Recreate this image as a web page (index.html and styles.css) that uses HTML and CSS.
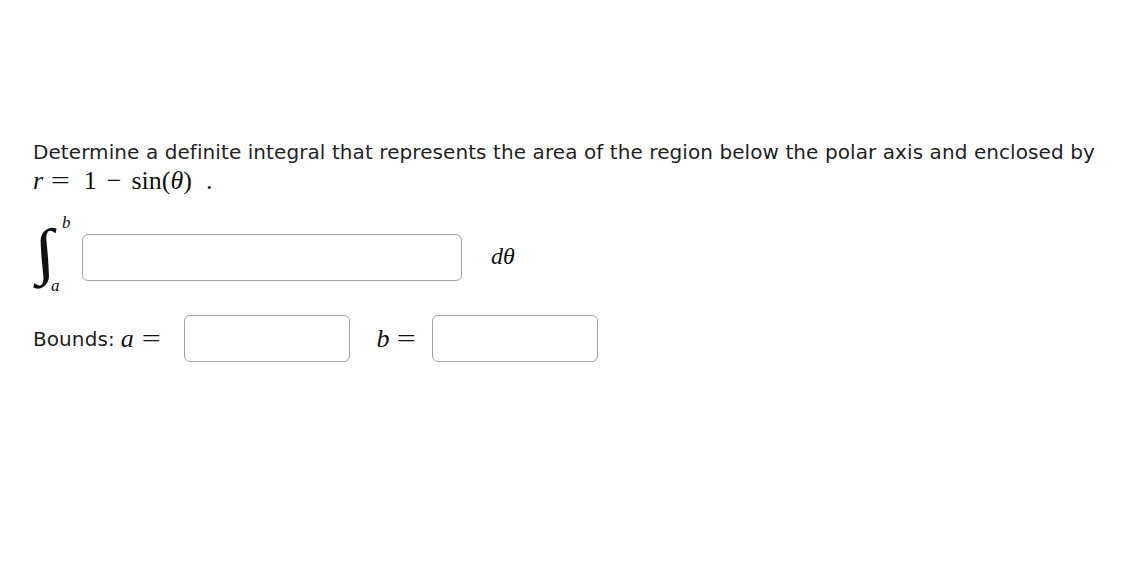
FILE: index.html
```html
<!DOCTYPE html>
<html>
<head>
<meta charset="utf-8">
<link rel="stylesheet" href="styles.css">
</head>
<body>
<div class="page">
  <p class="question">Determine a definite integral that represents the area of the region below the polar axis and enclosed by<br><span class="math"><i>r</i><span class="rel">=</span>1<span class="bin">&minus;</span>sin(<i>&theta;</i>)</span><span class="math dot">.</span></p>
  <div class="integral-row">
    <div class="integral">
      <span class="int-sign">&int;</span>
      <span class="lim lim-b">b</span>
      <span class="lim lim-a">a</span>
    </div>
    <div class="box big"></div>
    <span class="math dtheta"><i>d&theta;</i></span>
  </div>
  <div class="bounds-row">
    <span class="label">Bounds:</span>
    <span class="math alabel"><i>a</i><span class="rel">=</span></span>
    <div class="box small"></div>
    <span class="math blabel"><i>b</i><span class="rel">=</span></span>
    <div class="box small"></div>
  </div>
</div>
</body>
</html>
```

FILE: styles.css
```css
html, body {
  margin: 0;
  padding: 0;
  background: #ffffff;
}
.page {
  padding: 137px 0 0 33px;
  font-family: "DejaVu Sans", sans-serif;
  color: #1f1f1f;
  font-size: 20px;
  letter-spacing: 0.08px;
}
.question {
  margin: 0;
  line-height: 30px;
}
.math {
  font-family: "Liberation Serif", "DejaVu Serif", serif;
  font-size: 26px;
  letter-spacing: 0;
  line-height: 1;
  color: #111;
}
.math i {
  font-style: italic;
}
.rel {
  display: inline-block;
  margin: 0 16px 0 10px;
  transform: scaleX(1.3);
}
.bin {
  display: inline-block;
  padding: 0 10px;
}
.dot {
  margin-left: 14px;
}
.integral-row {
  display: flex;
  align-items: center;
  margin-top: 25px;
  height: 71px;
}
.integral {
  position: relative;
  flex: 0 0 49px;
  height: 71px;
}
.int-sign {
  position: absolute;
  left: 3px;
  top: -2px;
  font-family: "Liberation Serif", serif;
  font-size: 62px;
  font-style: italic;
  line-height: 1;
  transform: scale(1.2, 1.0) skewX(4deg);
  transform-origin: 50% 50%;
  color: #111;
}
.lim {
  position: absolute;
  font-family: "Liberation Serif", serif;
  font-style: italic;
  font-size: 17px;
  line-height: 1;
  color: #111;
}
.lim-b {
  left: 29px;
  top: -8px;
}
.lim-a {
  left: 18px;
  top: 55px;
}
.box {
  box-sizing: border-box;
  border: 1px solid #a3a3a3;
  border-radius: 6px;
  height: 47px;
  background: #fff;
  flex: none;
}
.box.big {
  width: 380px;
}
.box.small {
  width: 166px;
}
.dtheta {
  margin-left: 29px;
  margin-top: -4px;
  font-size: 24px;
}
.bounds-row {
  display: flex;
  align-items: center;
  margin-top: 22px;
}
.label {
  margin-right: 6px;
}
.alabel {
  margin-right: 10px;
}
.blabel {
  margin-left: 26px;
  margin-right: 2px;
}
```
